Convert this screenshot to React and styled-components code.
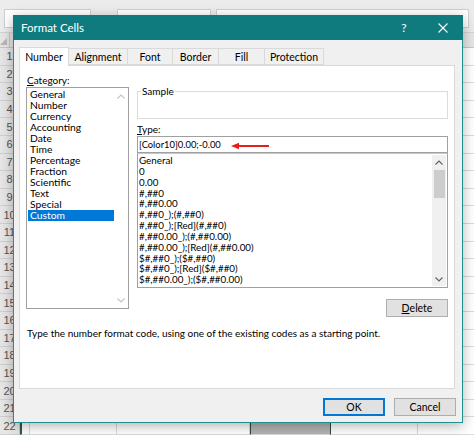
import styled, { createGlobalStyle } from "styled-components";

const GlobalStyle = createGlobalStyle`
  html, body {
    margin: 0;
    padding: 0;
  }
  body {
    width: 474px;
    height: 435px;
    overflow: hidden;
    background: #fff;
    font-family: Lato, "Liberation Sans", sans-serif;
  }
`;

const columns = [
  { w: 10 },
  { w: 87 },
  { w: 133 },
  { w: 81, shade: true },
  { w: 87 },
  { w: 87 },
];

const rows = Array.from({ length: 22 }, (_, i) => i + 1);

const tabs = ["Number", "Alignment", "Font", "Border", "Fill", "Protection"];
const tabWidths = [50, 59, 45, 46, 46, 59];

const categories = [
  "General",
  "Number",
  "Currency",
  "Accounting",
  "Date",
  "Time",
  "Percentage",
  "Fraction",
  "Scientific",
  "Text",
  "Special",
  "Custom",
];

const formats = [
  "General",
  "0",
  "0.00",
  "#,##0",
  "#,##0.00",
  "#,##0_);(#,##0)",
  "#,##0_);[Red](#,##0)",
  "#,##0.00_);(#,##0.00)",
  "#,##0.00_);[Red](#,##0.00)",
  "$#,##0_);($#,##0)",
  "$#,##0_);[Red]($#,##0)",
  "$#,##0.00_);($#,##0.00)",
];

function Chevron({ up, color }) {
  return (
    <svg width="8" height="5" viewBox="0 0 8 5">
      <polyline
        points={up ? "0.5,4.5 4,1 7.5,4.5" : "0.5,0.5 4,4 7.5,0.5"}
        fill="none"
        stroke={color}
        strokeWidth="1.1"
      />
    </svg>
  );
}

function App() {
  return (
    <>
      <GlobalStyle />
      <Sheet>
        <FormulaBar>
          <NameBox />
          <BarGap />
          <FormulaBox style={{ width: 92 }} />
          <FormulaBox style={{ flex: 1 }} />
        </FormulaBar>
        <ColumnHeaderRow>
          <Corner>
            <svg width="7" height="7" viewBox="0 0 7 7">
              <polygon points="7,0 7,7 0,7" fill="#b8b8b8" />
            </svg>
          </Corner>
          {columns.map((c, i) => (
            <ColumnHeader key={i} style={{ width: c.w }} />
          ))}
        </ColumnHeaderRow>
        {rows.map((r) => (
          <SheetRow key={r}>
            <RowHead>{r}</RowHead>
            {columns.map((c, i) => (
              <Cell key={i} style={{ width: c.w }} $shade={c.shade} $first={i === 0} />
            ))}
          </SheetRow>
        ))}

        <Dialog>
          <TitleBar>
            <Title>Format Cells</Title>
            <HelpButton>?</HelpButton>
            <CloseButton>
              <svg width="10" height="10" viewBox="0 0 10 10">
                <path d="M0.5 0.5 L9.5 9.5 M9.5 0.5 L0.5 9.5" stroke="#fff" strokeWidth="1.1" />
              </svg>
            </CloseButton>
          </TitleBar>

          <TabStrip>
            {tabs.map((t, i) => (
              <Tab key={t} $active={i === 0} style={{ width: tabWidths[i] }}>
                {t}
              </Tab>
            ))}
          </TabStrip>

          <Panel>
            <LeftColumn>
              <FieldLabel>
                <u>C</u>ategory:
              </FieldLabel>
              <CategoryList>
                <Items>
                  {categories.map((c) => (
                    <CategoryItem key={c} $selected={c === "Custom"}>
                      {c}
                    </CategoryItem>
                  ))}
                </Items>
                <ScrollBar $disabled>
                  <ArrowBox>
                    <Chevron up color="#c4c4c4" />
                  </ArrowBox>
                  <Track />
                  <ArrowBox>
                    <Chevron color="#c4c4c4" />
                  </ArrowBox>
                </ScrollBar>
              </CategoryList>
            </LeftColumn>

            <RightColumn>
              <SampleBox>
                <legend>Sample</legend>
              </SampleBox>
              <TypeLabel>
                <u>T</u>ype:
              </TypeLabel>
              <TypeInput>
                [Color10]0.00;-0.00
                <Pointer>
                  <svg width="40" height="8" viewBox="0 0 40 8">
                    <polygon points="0,4 8,0.8 8,7.2" fill="#e3201b" />
                    <line x1="7" y1="4" x2="38" y2="4" stroke="#e3201b" strokeWidth="2" />
                  </svg>
                </Pointer>
              </TypeInput>
              <FormatList>
                <Items>
                  {formats.map((f) => (
                    <FormatItem key={f}>{f}</FormatItem>
                  ))}
                </Items>
                <ScrollBar>
                  <ArrowBox>
                    <Chevron up color="#606060" />
                  </ArrowBox>
                  <Track>
                    <Thumb />
                  </Track>
                  <ArrowBox>
                    <Chevron color="#606060" />
                  </ArrowBox>
                </ScrollBar>
              </FormatList>
              <ButtonRow>
                <DialogButton>
                  <u>D</u>elete
                </DialogButton>
              </ButtonRow>
            </RightColumn>

            <Hint>
              Type the number format code, using one of the existing codes as a starting point.
            </Hint>
          </Panel>

          <Footer>
            <DialogButton $primary>OK</DialogButton>
            <DialogButton>Cancel</DialogButton>
          </Footer>
        </Dialog>
      </Sheet>
    </>
  );
}

export default App;

const Sheet = styled.div`
  position: relative;
  width: 474px;
  height: 435px;
  overflow: hidden;
  background: #fff;
`;

const FormulaBar = styled.div`
  display: flex;
  height: 33px;
  box-sizing: border-box;
  padding: 9px 0 4px 4px;
  background: #ececec;
  border-bottom: 1px solid #d4d4d4;
`;

const NameBox = styled.div`
  width: 85px;
  background: #fff;
  border: 1px solid #cfcfcf;
`;

const BarGap = styled.div`
  width: 26px;
`;

const FormulaBox = styled.div`
  margin-right: 5px;
  background: #fff;
  border: 1px solid #cfcfcf;
`;

const ColumnHeaderRow = styled.div`
  display: flex;
  height: 15px;
  box-sizing: border-box;
  background: #e6e6e6;
  border-bottom: 1px solid #c6c6c6;
`;

const Corner = styled.div`
  width: 20px;
  display: flex;
  align-items: flex-end;
  justify-content: flex-end;
  padding: 0 2px 2px 0;
  box-sizing: border-box;
  border-right: 1px solid #c6c6c6;
`;

const ColumnHeader = styled.div`
  flex-shrink: 0;
  box-sizing: border-box;
  border-right: 1px solid #c6c6c6;
`;

const SheetRow = styled.div`
  display: flex;
  height: 17.6px;
`;

const RowHead = styled.div`
  width: 20px;
  flex-shrink: 0;
  box-sizing: border-box;
  background: #e6e6e6;
  border-right: 1px solid #c6c6c6;
  border-bottom: 1px solid #cfcfcf;
  color: #555;
  font-size: 11px;
  font-family: "Liberation Sans", sans-serif;
  display: flex;
  align-items: center;
  justify-content: center;
`;

const Cell = styled.div`
  flex-shrink: 0;
  box-sizing: border-box;
  border-right: 1px solid ${(p) => (p.$shade ? "#2e4a40" : "#dadada")};
  border-bottom: 1px solid #dadada;
  border-left: ${(p) => (p.$shade ? "1px solid #2e4a40" : p.$first ? "2px solid #2e5a4c" : "none")};
  background: ${(p) => (p.$shade ? "#b3b3b3" : "#fff")};
`;

const Dialog = styled.div`
  position: absolute;
  left: 13px;
  top: 15px;
  width: 450px;
  height: 408px;
  box-sizing: border-box;
  display: flex;
  flex-direction: column;
  background: #f0f0f0;
  border: 1px solid #1f9090;
  border-top: none;
  box-shadow: 0 3px 12px rgba(0, 0, 0, 0.3);
  font-size: 10px;
  color: #000;
`;

const TitleBar = styled.div`
  height: 25px;
  margin: 0 -1px;
  flex-shrink: 0;
  display: flex;
  align-items: center;
  background: #0f7b7f;
  color: #fff;
  padding-left: 8px;
`;

const Title = styled.div`
  flex: 1;
  font-size: 11.5px;
`;

const HelpButton = styled.div`
  width: 38px;
  text-align: center;
  font-size: 12px;
`;

const CloseButton = styled.div`
  width: 40px;
  display: flex;
  align-items: center;
  justify-content: center;
`;

const TabStrip = styled.div`
  display: flex;
  align-items: flex-end;
  height: 18px;
  margin-top: 7px;
  padding-left: 5px;
  position: relative;
  z-index: 1;
`;

const Tab = styled.div`
  box-sizing: border-box;
  height: ${(p) => (p.$active ? "19px" : "17px")};
  display: flex;
  align-items: center;
  justify-content: center;
  border: 1px solid #d9d9d9;
  border-left-width: ${(p) => (p.$active ? "1px" : "0")};
  border-bottom: ${(p) => (p.$active ? "none" : "1px solid #d9d9d9")};
  background: ${(p) => (p.$active ? "#fff" : "#f0f0f0")};
  margin-bottom: ${(p) => (p.$active ? "-1px" : "0")};
  padding-bottom: ${(p) => (p.$active ? "1px" : "0")};
  font-size: 10.5px;
`;

const Panel = styled.div`
  height: 324px;
  box-sizing: border-box;
  margin: 0 7px 0 5px;
  background: #fff;
  border: 1px solid #d9d9d9;
  padding: 8px 6px 0 6px;
  display: grid;
  grid-template-columns: 103px 311px;
  grid-template-rows: auto auto;
  column-gap: 8px;
  align-content: start;
`;

const LeftColumn = styled.div`
  display: flex;
  flex-direction: column;
`;

const RightColumn = styled.div`
  display: flex;
  flex-direction: column;
  padding-top: 11px;
`;

const FieldLabel = styled.div`
  height: 13px;
  line-height: 12px;
  padding-left: 1px;
`;

const CategoryList = styled.div`
  height: 222px;
  box-sizing: border-box;
  border: 1px solid #a0a0a0;
  display: flex;
  padding: 1px 0 1px 1px;
`;

const Items = styled.div`
  flex: 1;
  min-width: 0;
  overflow: hidden;
`;

const CategoryItem = styled.div`
  height: 11px;
  line-height: 11px;
  padding-left: 2px;
  white-space: nowrap;
  font-size: 10.3px;
  background: ${(p) => (p.$selected ? "#0078d7" : "transparent")};
  color: ${(p) => (p.$selected ? "#fff" : "#000")};
`;

const ScrollBar = styled.div`
  width: 14px;
  flex-shrink: 0;
  display: flex;
  flex-direction: column;
  background: ${(p) => (p.$disabled ? "#fff" : "#f0f0f0")};
`;

const ArrowBox = styled.div`
  height: 14px;
  display: flex;
  align-items: center;
  justify-content: center;
`;

const Track = styled.div`
  flex: 1;
  padding: 1px 1px 0 2px;
`;

const Thumb = styled.div`
  height: 28px;
  background: #cdcdcd;
`;

const SampleBox = styled.fieldset`
  margin: 0;
  padding: 0;
  height: 34px;
  box-sizing: border-box;
  border: 1px solid #dcdcdc;

  legend {
    margin-left: 3px;
    padding: 0 1px;
    line-height: 12px;
    font-size: 10px;
  }
`;

const TypeLabel = styled.div`
  margin-top: 4px;
  height: 13px;
  line-height: 12px;
`;

const TypeInput = styled.div`
  position: relative;
  height: 17px;
  box-sizing: border-box;
  border: 1px solid #a0a0a0;
  padding-left: 1px;
  line-height: 15px;
  font-size: 9.4px;
  white-space: nowrap;
`;

const Pointer = styled.div`
  position: absolute;
  left: 93px;
  top: 5px;
  line-height: 0;
`;

const FormatList = styled.div`
  height: 135px;
  box-sizing: border-box;
  border: 1px solid #a0a0a0;
  border-top: 1px solid #c8c8c8;
  display: flex;
  padding: 1px 1px 1px 0;
`;

const FormatItem = styled.div`
  height: 10.85px;
  line-height: 10.85px;
  padding-left: 1px;
  font-size: 9.8px;
  white-space: nowrap;
`;

const ButtonRow = styled.div`
  display: flex;
  justify-content: flex-end;
  margin-top: 11px;
`;

const DialogButton = styled.div`
  width: 62px;
  height: 18px;
  box-sizing: border-box;
  display: flex;
  align-items: center;
  justify-content: center;
  background: #e1e1e1;
  border: ${(p) => (p.$primary ? "2px solid #0078d7" : "1px solid #adadad")};
  font-size: 10.5px;
`;

const Hint = styled.div`
  grid-column: 1 / span 2;
  margin-top: 10px;
  line-height: 12px;
  padding-left: 1px;
  white-space: nowrap;
`;

const Footer = styled.div`
  display: flex;
  justify-content: flex-end;
  gap: 9px;
  padding: 9px 6px 0 0;
`;
